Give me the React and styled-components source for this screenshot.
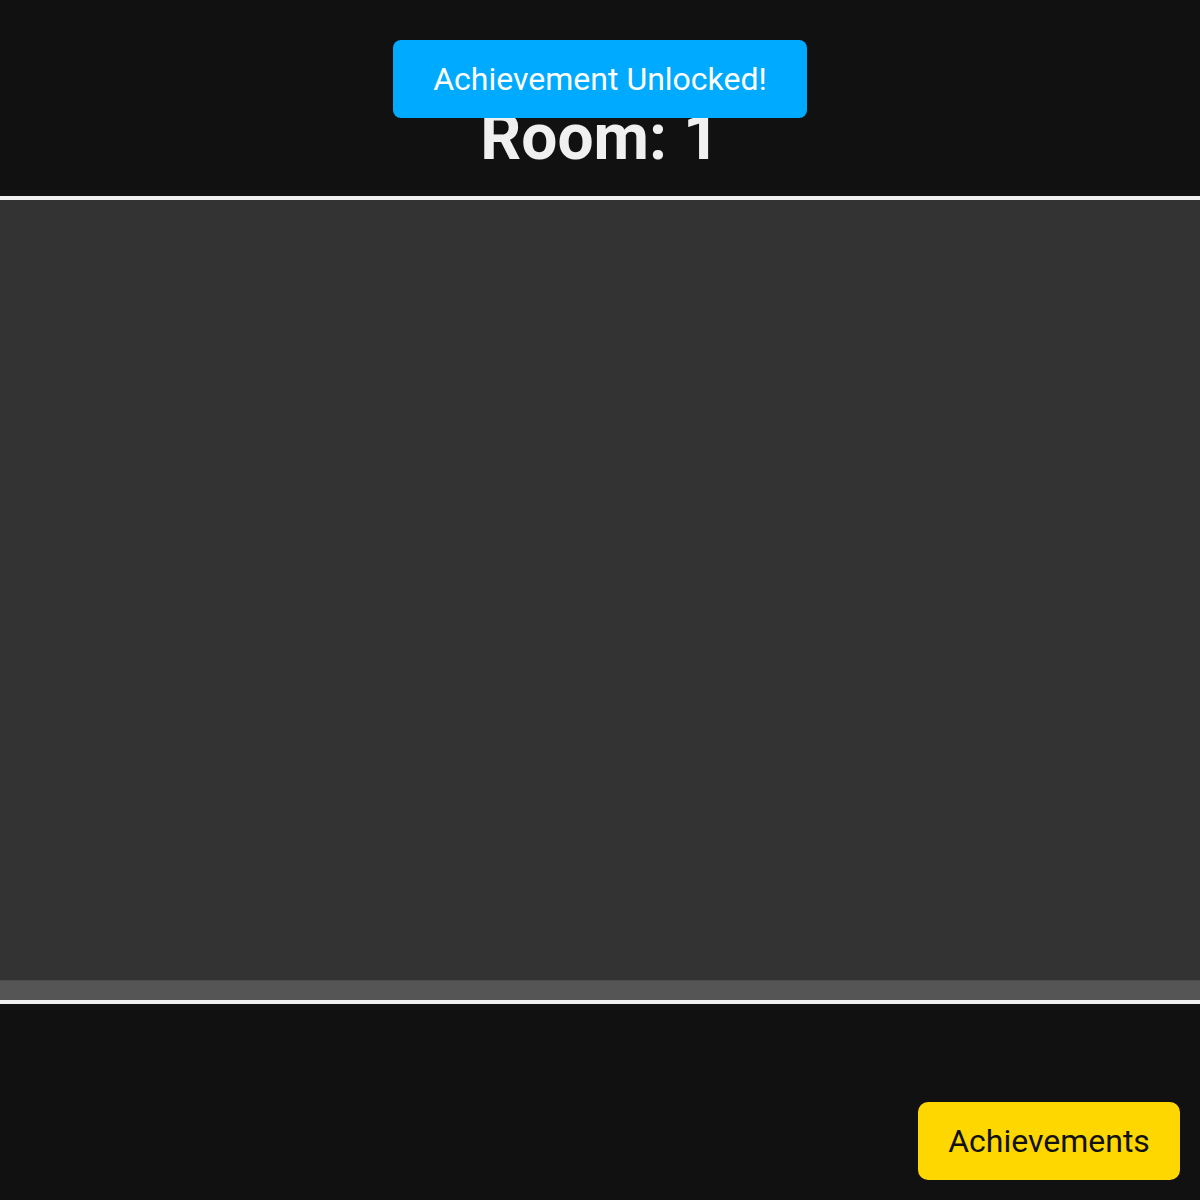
import React from "react";
import styled, { createGlobalStyle } from "styled-components";

const Global = createGlobalStyle`
  html, body { margin: 0; padding: 0; background: #111111; }
  body { font-family: Roboto, "Noto Sans", "Liberation Sans", sans-serif; color: #f0f0f0; }
  * { box-sizing: border-box; }
`;

const Page = styled.div`
  width: 1200px;
  height: 1200px;
  background: #111111;
  display: flex;
  flex-direction: column;
`;

const Header = styled.header`
  height: 196px;
  padding-top: 102px;
  display: flex;
  justify-content: center;
`;

const Title = styled.h1`
  margin: 0;
  font-size: 64px;
  line-height: 72px;
  font-weight: 700;
  color: #f0f0f0;
`;

const Stage = styled.section`
  height: 808px;
  border-top: 4px solid #f0f0f0;
  border-bottom: 4px solid #f0f0f0;
  display: flex;
  flex-direction: column;
`;

const Board = styled.div`
  flex: 1;
  background: #333333;
`;

const Track = styled.div`
  height: 20px;
  background: #555555;
  border-top: 1px solid #4a4a4a;
`;

const Toast = styled.div`
  position: fixed;
  top: 40px;
  left: 50%;
  transform: translateX(-50%);
  width: 414px;
  height: 78px;
  display: flex;
  align-items: center;
  justify-content: center;
  background: #00aaff;
  color: #ffffff;
  border-radius: 8px;
  font-size: 32px;
  white-space: nowrap;
`;

const AchButton = styled.button`
  position: fixed;
  right: 20px;
  bottom: 20px;
  width: 262px;
  height: 78px;
  border: none;
  border-radius: 10px;
  background: #ffd700;
  color: #111111;
  font-family: Roboto, "Noto Sans", "Liberation Sans", sans-serif;
  font-size: 32px;
  cursor: pointer;
`;

export default function App() {
  return (
    <>
      <Global />
      <Page>
        <Header>
          <Title>Room: 1</Title>
        </Header>
        <Stage>
          <Board />
          <Track />
        </Stage>
      </Page>
      <Toast>Achievement Unlocked!</Toast>
      <AchButton>Achievements</AchButton>
    </>
  );
}
